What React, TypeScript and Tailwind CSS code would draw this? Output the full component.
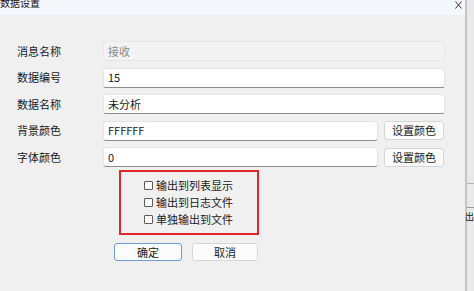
import React from "react";

const FONT = { fontFamily: '"Noto Sans CJK SC", "Noto Sans", sans-serif' };

const Field = ({ value, wide = true }: { value: string; wide?: boolean }) => (
  <div
    className={`flex h-[20px] items-center rounded-[3px] border border-[#e3e3e3] border-b-[#8c8c8c] bg-white pl-[4px] text-[11px] text-[#1a1a1a] ${
      wide ? "w-[342px]" : "w-[275px]"
    }`}
  >
    {value}
  </div>
);

const ColorButton = () => (
  <button className="flex h-[19px] w-[60px] items-center justify-center rounded-[3px] border border-[#d6d6d6] bg-[#fbfbfb] text-[11px] text-[#1a1a1a]">
    设置颜色
  </button>
);

const Row = ({ label, children }: { label: string; children: React.ReactNode }) => (
  <div className="flex h-[20px] items-center">
    <span className="w-[86px] text-[11px] text-[#1a1a1a]">{label}</span>
    {children}
  </div>
);

const Check = ({ label }: { label: string }) => (
  <label className="flex h-[17px] items-center gap-[3px] text-[11px] text-[#1a1a1a]">
    <span className="h-[9px] w-[9px] rounded-[1px] border border-[#5c5c5c] bg-white" />
    {label}
  </label>
);

export default function App() {
  return (
    <div className="flex h-[291px] w-[474px] overflow-hidden bg-[#f0f0f0]" style={FONT}>
      <div className="flex w-[467px] flex-col">
        {/* title bar */}
        <div className="relative flex h-[15px] items-start bg-[#f4f8fd]">
          <span className="-mt-[4px] text-[10px] leading-[14px] text-[#111]">数据设置</span>
          <svg className="absolute left-[455px] top-[1px]" width="7" height="8" viewBox="0 0 7 8">
            <path d="M0.5 0.5 L6.5 7.5 M6.5 0.5 L0.5 7.5" stroke="#333" strokeWidth="1" />
          </svg>
        </div>

        <div className="flex flex-col gap-[6.5px] pl-[17px] pt-[26px]">
          <Row label="消息名称">
            <div className="flex h-[20px] w-[342px] items-center rounded-[3px] border border-[#e6e6e6] bg-[#f3f3f3] pl-[4px] text-[11px] text-[#8a8a8a]">
              接收
            </div>
          </Row>
          <Row label="数据编号">
            <Field value="15" />
          </Row>
          <Row label="数据名称">
            <Field value="未分析" />
          </Row>
          <Row label="背景颜色">
            <Field value="FFFFFF" wide={false} />
            <div className="ml-[6px]">
              <ColorButton />
            </div>
          </Row>
          <Row label="字体颜色">
            <Field value="0" wide={false} />
            <div className="ml-[6px]">
              <ColorButton />
            </div>
          </Row>
        </div>

        <div className="ml-[119px] mt-[3px] flex h-[65px] w-[140px] flex-col justify-center border-2 border-[#e0262b] pl-[23px]">
          <Check label="输出到列表显示" />
          <Check label="输出到日志文件" />
          <Check label="单独输出到文件" />
        </div>

        <div className="ml-[114px] mt-[8px] flex gap-[10px]">
          <button className="flex h-[18px] w-[68px] items-center justify-center rounded-[3px] border border-[#6a9fd6] bg-[#fbfbfb] text-[11px] text-[#1a1a1a]">
            确定
          </button>
          <button className="flex h-[18px] w-[66px] items-center justify-center rounded-[3px] border border-[#d6d6d6] bg-[#fbfbfb] text-[11px] text-[#1a1a1a]">
            取消
          </button>
        </div>
      </div>

      {/* edge of the window behind */}
      <div className="w-[2px] bg-[#c4c4c4]" />
      <div className="flex flex-1 flex-col bg-[#e9e9e9]">
        <div className="mt-[183px] h-px bg-[#b5b5b5]" />
        <div className="mt-[23px] h-px bg-[#9a9a9a]" />
        <span className="-ml-[2px] mt-[4px] text-[9px] leading-[10px] text-[#222]">出</span>
      </div>
    </div>
  );
}
